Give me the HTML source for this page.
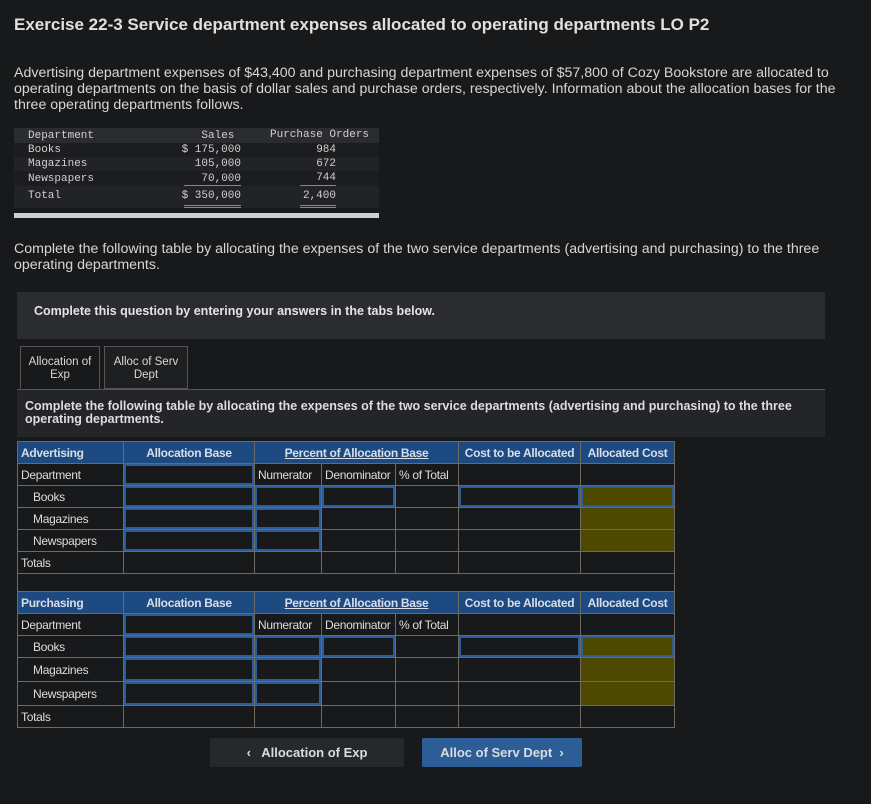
<!DOCTYPE html>
<html><head><style>
body{margin:0;background:#18191b;width:871px;height:804px;overflow:hidden;font-family:"Liberation Sans",sans-serif;color:#d8d8d8;position:relative}
.a{position:absolute}
h1{position:absolute;left:14px;top:15px;margin:0;font-size:17px;font-weight:bold;color:#e0e0e0}
.p{font-size:14.2px;line-height:16px;color:#d6d6d6}
.mono{font-family:"Liberation Mono",monospace;font-size:11px;color:#d0d0d0;white-space:nowrap}
table.t{position:absolute;border-collapse:collapse;table-layout:fixed;font-size:12px;letter-spacing:-0.3px}
table.t td{border:1px solid #6e6a62;padding:0 3px;height:21px;color:#ddd;white-space:nowrap;overflow:hidden}
table.t tr.h td{background:#1d4a80;font-weight:bold;text-align:center;color:#d8dde8}
table.t tr.h td:first-child{text-align:left}
.in{box-shadow:inset 0 0 0 2px #2b5c9c}
.ol{background:#4d4a00}
.ind{padding-left:15px!important}
.btn{position:absolute;top:738px;height:29px;border-radius:2px;font-weight:bold;font-size:13px;text-align:center;line-height:29px;color:#dcdcdc}
</style></head><body>
<h1>Exercise 22-3 Service department expenses allocated to operating departments LO P2</h1>
<div class="a p" style="left:14px;top:65px;width:845px">Advertising department expenses of $43,400 and purchasing department expenses of $57,800 of Cozy Bookstore are allocated to operating departments on the basis of dollar sales and purchase orders, respectively. Information about the allocation bases for the three operating departments follows.</div>

<div class="a" style="left:14px;top:128px;width:365px;height:15px;background:#2a2c2f"></div>
<div class="a" style="left:14px;top:143px;width:365px;height:14px;background:#1c1d1f"></div>
<div class="a" style="left:14px;top:157px;width:365px;height:14px;background:#222326"></div>
<div class="a" style="left:14px;top:171px;width:365px;height:15px;background:#1c1d1f"></div>
<div class="a" style="left:14px;top:186px;width:365px;height:22px;background:#222326"></div>
<div class="a" style="left:14px;top:213px;width:365px;height:5px;background:#cbd0d8"></div>
<div class="a mono" style="left:28px;top:129px;line-height:14.2px">Department<br>Books<br>Magazines<br>Newspapers</div>
<div class="a mono" style="left:28px;top:190px">Total</div>
<div class="a mono" style="left:176px;top:129px;width:65px;text-align:right;line-height:14.2px">Sales&nbsp;<br>$&nbsp;175,000<br>105,000<br>70,000</div>
<div class="a" style="left:184px;top:185px;width:57px;border-top:1px solid #888"></div>
<div class="a mono" style="left:176px;top:190px;width:65px;text-align:right">$&nbsp;350,000</div>
<div class="a" style="left:184px;top:205px;width:57px;height:1px;border-top:1px solid #888;border-bottom:1px solid #888"></div>
<div class="a mono" style="left:270px;top:129px">Purchase Orders</div>
<div class="a mono" style="left:300px;top:143px;width:36px;text-align:right;line-height:14.2px">984<br>672<br>744</div>
<div class="a" style="left:300px;top:185px;width:36px;border-top:1px solid #888"></div>
<div class="a mono" style="left:300px;top:190px;width:36px;text-align:right">2,400</div>
<div class="a" style="left:300px;top:205px;width:36px;height:1px;border-top:1px solid #888;border-bottom:1px solid #888"></div>

<div class="a p" style="left:14px;top:241px;width:845px">Complete the following table by allocating the expenses of the two service departments (advertising and purchasing) to the three operating departments.</div>

<div class="a" style="left:17px;top:292px;width:808px;height:47px;background:#2a2c2f"></div>
<div class="a" style="left:34px;top:304px;font-weight:bold;font-size:12.5px;color:#e4e4e4">Complete this question by entering your answers in the tabs below.</div>

<div class="a" style="left:20px;top:346px;width:80px;height:44px;border:1px solid #555;border-bottom:none;background:#18191b;text-align:center;font-size:11.5px;line-height:13px;padding-top:9px;box-sizing:border-box">Allocation of<br>Exp</div>
<div class="a" style="left:104px;top:346px;width:84px;height:43px;border:1px solid #555;background:#1e1f21;text-align:center;font-size:11.5px;line-height:13px;padding-top:9px;box-sizing:border-box">Alloc of Serv<br>Dept</div>
<div class="a" style="left:17px;top:389px;width:808px;height:47px;background:#232528;border-top:1px solid #555"></div>
<div class="a" style="left:25px;top:400px;width:790px;font-size:12.5px;font-weight:bold;line-height:13px;color:#ddd">Complete the following table by allocating the expenses of the two service departments (advertising and purchasing) to the three operating departments.</div>

<table class="t" style="left:17px;top:441px;width:657px">
<colgroup><col style="width:106px"><col style="width:131px"><col style="width:67px"><col style="width:74px"><col style="width:63px"><col style="width:122px"><col style="width:94px"></colgroup>
<tr class="h"><td>Advertising</td><td>Allocation Base</td><td colspan="3"><u>Percent of Allocation Base</u></td><td>Cost to be Allocated</td><td>Allocated Cost</td></tr>
<tr><td>Department</td><td class="in"></td><td>Numerator</td><td>Denominator</td><td>% of Total</td><td></td><td></td></tr>
<tr><td class="ind">Books</td><td class="in"></td><td class="in"></td><td class="in"></td><td></td><td class="in"></td><td class="ol in"></td></tr>
<tr><td class="ind">Magazines</td><td class="in"></td><td class="in"></td><td></td><td></td><td></td><td class="ol"></td></tr>
<tr><td class="ind">Newspapers</td><td class="in"></td><td class="in"></td><td></td><td></td><td></td><td class="ol"></td></tr>
<tr><td>Totals</td><td></td><td></td><td></td><td></td><td></td><td></td></tr>
<tr><td colspan="7" style="height:17px"></td></tr>
<tr class="h"><td>Purchasing</td><td>Allocation Base</td><td colspan="3"><u>Percent of Allocation Base</u></td><td>Cost to be Allocated</td><td>Allocated Cost</td></tr>
<tr><td>Department</td><td class="in"></td><td>Numerator</td><td>Denominator</td><td>% of Total</td><td></td><td></td></tr>
<tr><td class="ind">Books</td><td class="in"></td><td class="in"></td><td class="in"></td><td></td><td class="in"></td><td class="ol in"></td></tr>
<tr><td class="ind" style="height:23px">Magazines</td><td class="in"></td><td class="in"></td><td></td><td></td><td></td><td class="ol"></td></tr>
<tr><td class="ind" style="height:23px">Newspapers</td><td class="in"></td><td class="in"></td><td></td><td></td><td></td><td class="ol"></td></tr>
<tr><td style="height:21px">Totals</td><td></td><td></td><td></td><td></td><td></td><td></td></tr>
</table>

<div class="btn" style="left:210px;width:194px;background:#26292b">&#8249;&nbsp;&nbsp; Allocation of Exp</div>
<div class="btn" style="left:422px;width:160px;background:#2c5d96">Alloc of Serv Dept &nbsp;&#8250;</div>
</body></html>
